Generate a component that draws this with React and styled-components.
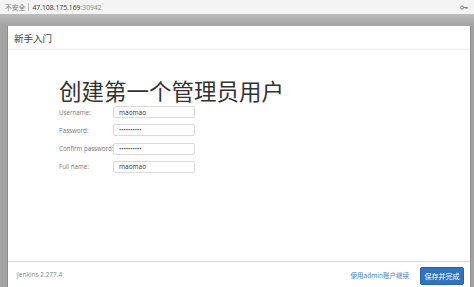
import React from 'react';
import styled, { createGlobalStyle } from 'styled-components';

const GlobalStyle = createGlobalStyle`
  html, body { margin: 0; padding: 0; }
  body {
    width: 474px;
    height: 287px;
    overflow: hidden;
    font-family: "Open Sans", "Noto Sans CJK SC", sans-serif;
    background: #a9a9a9;
  }
`;

const Page = styled.div`
  display: flex;
  flex-direction: column;
  height: 287px;
`;

const AddressBar = styled.div`
  display: flex;
  align-items: center;
  height: 14px;
  padding: 0 6px 0 5px;
  background: #f4f4f4;
  font-size: 6.8px;
  color: #333;
  gap: 3px;
`;

const Insecure = styled.span`
  color: #777;
`;

const Sep = styled.span`
  width: 1px;
  height: 8px;
  background: #bbb;
`;

const Port = styled.span`
  color: #888;
`;

const Key = styled.span`
  margin-left: auto;
  display: flex;
`;

const Backdrop = styled.div`
  flex: 1;
  display: flex;
  padding: 12px 3px 0 7px;
  background: linear-gradient(#bdbdbd, #a3a3a3 12px);
  min-height: 0;
`;

const Dialog = styled.div`
  flex: 1;
  display: flex;
  flex-direction: column;
  background: #fff;
  border-left: 1px solid #8d8d8d;
  border-right: 1px solid #8d8d8d;
`;

const Header = styled.div`
  height: 24px;
  display: flex;
  align-items: center;
  padding-left: 6px;
  border-bottom: 1px solid #ececec;
  font-size: 9.5px;
  color: #444;
  box-sizing: border-box;
`;

const Body = styled.div`
  flex: 1;
  padding: 26px 0 0 51px;
`;

const Title = styled.h1`
  margin: 0;
  font-family: "Noto Sans CJK SC", sans-serif;
  font-weight: 400;
  font-size: 22.5px;
  line-height: 28px;
  color: #333;
`;

const Form = styled.div`
  display: flex;
  flex-direction: column;
  gap: 6.3px;
  margin-top: 2px;
`;

const Row = styled.div`
  display: grid;
  grid-template-columns: 54px 82px;
  align-items: center;
  height: 12px;
`;

const Label = styled.label`
  font-size: 6.2px;
  color: #777;
  white-space: nowrap;
`;

const Field = styled.input`
  box-sizing: border-box;
  width: 82px;
  height: 12px;
  padding: 0 5px;
  border: 1px solid #d9d9d9;
  border-radius: 2px;
  font-family: "Open Sans", sans-serif;
  font-size: ${p => (p.type === 'password' ? '6px' : '6.5px')};
  color: #333;
  outline: none;
  background: #fff;
`;

const Footer = styled.div`
  height: 26px;
  display: flex;
  align-items: center;
  padding: 0 6px 0 9px;
  border-top: 1px solid #d8d8d8;
  box-sizing: border-box;
`;

const Version = styled.span`
  font-size: 6.5px;
  color: #888;
`;

const Link = styled.a`
  margin-left: auto;
  margin-right: 11px;
  font-family: "Noto Sans CJK SC", sans-serif;
  font-size: 6.5px;
  color: #4a82bf;
  text-decoration: none;
`;

const Button = styled.button`
  width: 44px;
  height: 18px;
  margin-top: 3px;
  padding: 0;
  border: 1px solid #2a64a6;
  border-radius: 2px;
  background: #3174bd;
  color: #fff;
  font-family: "Noto Sans CJK SC", sans-serif;
  font-size: 7px;
`;

const fields = [
  { label: 'Username:', type: 'text', value: 'maomao' },
  { label: 'Password:', type: 'password', value: 'maomao1234' },
  { label: 'Confirm password:', type: 'password', value: 'maomao1234' },
  { label: 'Full name:', type: 'text', value: 'maomao' },
];

export default function App() {
  return (
    <Page>
      <GlobalStyle />
      <AddressBar>
        <Insecure>不安全</Insecure>
        <Sep />
        <span>
          47.108.175.169<Port>:30942</Port>
        </span>
        <Key>
          <svg width="8" height="5" viewBox="0 0 8 5">
            <circle cx="2" cy="2.5" r="1.6" fill="none" stroke="#777" strokeWidth="0.9" />
            <path d="M3.6 2.5H7.6M6.2 2.5V4M7.4 2.5V3.6" stroke="#777" strokeWidth="0.9" fill="none" />
          </svg>
        </Key>
      </AddressBar>
      <Backdrop>
        <Dialog>
          <Header>新手入门</Header>
          <Body>
            <Title>创建第一个管理员用户</Title>
            <Form>
              {fields.map(f => (
                <Row key={f.label}>
                  <Label>{f.label}</Label>
                  <Field type={f.type} defaultValue={f.value} readOnly />
                </Row>
              ))}
            </Form>
          </Body>
          <Footer>
            <Version>Jenkins 2.277.4</Version>
            <Link href="#">使用admin账户继续</Link>
            <Button>保存并完成</Button>
          </Footer>
        </Dialog>
      </Backdrop>
    </Page>
  );
}
